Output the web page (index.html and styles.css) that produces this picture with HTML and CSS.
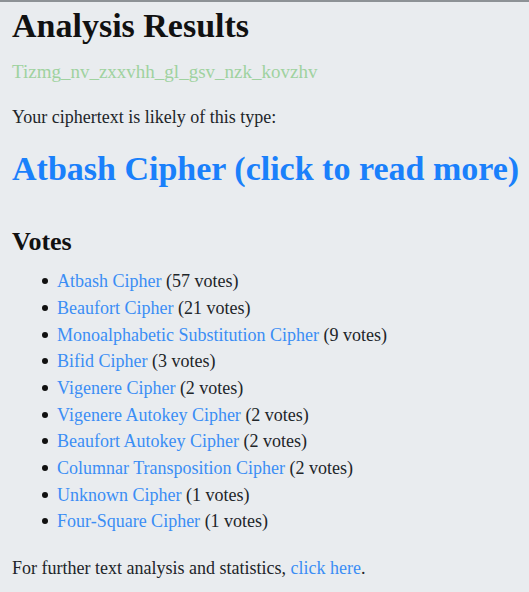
FILE: index.html
```html
<!DOCTYPE html>
<html>
<head>
<meta charset="utf-8">
<link rel="stylesheet" href="styles.css">
</head>
<body>
<div class="page">
  <h1 class="title">Analysis Results</h1>
  <p class="cipher">Tizmg_nv_zxxvhh_gl_gsv_nzk_kovzhv</p>
  <p class="lead">Your ciphertext is likely of this type:</p>
  <h2 class="result"><a href="#">Atbash Cipher (click to read more)</a></h2>
  <h3 class="votes-title">Votes</h3>
  <ul class="votes">
    <li><a href="#">Atbash Cipher</a> (57 votes)</li>
    <li><a href="#">Beaufort Cipher</a> (21 votes)</li>
    <li><a href="#">Monoalphabetic Substitution Cipher</a> (9 votes)</li>
    <li><a href="#">Bifid Cipher</a> (3 votes)</li>
    <li><a href="#">Vigenere Cipher</a> (2 votes)</li>
    <li><a href="#">Vigenere Autokey Cipher</a> (2 votes)</li>
    <li><a href="#">Beaufort Autokey Cipher</a> (2 votes)</li>
    <li><a href="#">Columnar Transposition Cipher</a> (2 votes)</li>
    <li><a href="#">Unknown Cipher</a> (1 votes)</li>
    <li><a href="#">Four-Square Cipher</a> (1 votes)</li>
  </ul>
  <p class="footer">For further text analysis and statistics, <a href="#">click here</a>.</p>
</div>
</body>
</html>
```
FILE: styles.css
```css
html, body {
  margin: 0;
  padding: 0;
  background: #e9ecef;
}
body {
  border-top: 2px solid #8d9296;
  font-family: "Liberation Serif", "Times New Roman", serif;
  color: #212529;
}
.page {
  padding: 3.5px 12px 0;
}
a {
  color: #3b8ef5;
  text-decoration: none;
}
.title {
  margin: 0;
  font-size: 34px;
  line-height: 40px;
  font-weight: bold;
  color: #111;
}
.cipher {
  margin: 14px 0 0;
  font-size: 19px;
  line-height: 24px;
  color: #9fd29f;
}
.lead {
  margin: 21.5px 0 0;
  font-size: 18px;
  line-height: 24px;
}
.result {
  margin: 17.5px 0 0;
  font-size: 34px;
  line-height: 44px;
  font-weight: bold;
  white-space: nowrap;
}
.result a {
  color: #1a80fb;
}
.votes-title {
  margin: 36.5px 0 0;
  font-size: 26px;
  line-height: 30px;
  font-weight: bold;
  color: #111;
}
.votes {
  margin: 11.15px 0 0;
  padding-left: 45px;
  list-style: none;
  font-size: 18px;
  line-height: 26.7px;
}
.votes li::before {
  content: "";
  display: inline-block;
  width: 6px;
  height: 6px;
  border-radius: 50%;
  background: #111;
  margin-left: -15px;
  margin-right: 9px;
  vertical-align: 3px;
}
.footer {
  margin: 20.85px 0 0;
  font-size: 18px;
  line-height: 24px;
}
```
